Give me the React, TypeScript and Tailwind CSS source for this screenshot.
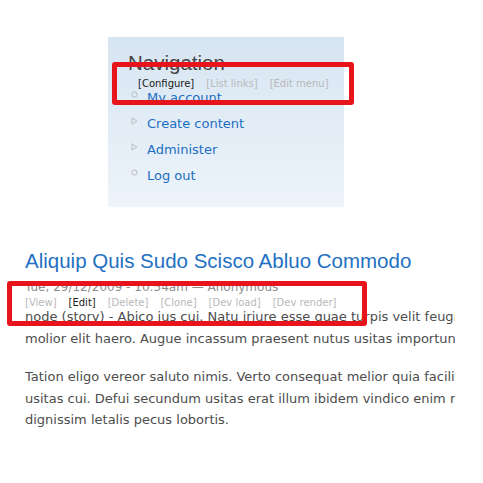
import React from 'react';

const navLinks = [
  { label: 'My account', kind: 'leaf' },
  { label: 'Create content', kind: 'collapsed' },
  { label: 'Administer', kind: 'collapsed' },
  { label: 'Log out', kind: 'leaf' },
];

const nodeLinks = [
  { label: '[View]', active: false },
  { label: '[Edit]', active: true },
  { label: '[Delete]', active: false },
  { label: '[Clone]', active: false },
  { label: '[Dev load]', active: false },
  { label: '[Dev render]', active: false },
];

const Bullet: React.FC<{ kind: string }> = ({ kind }) =>
  kind === 'leaf' ? (
    <svg width="7" height="7" viewBox="0 0 7 7" className="shrink-0">
      <circle cx="3.5" cy="3.5" r="2.6" fill="none" stroke="#b5b5b5" strokeWidth="0.9" />
    </svg>
  ) : (
    <svg width="7" height="8" viewBox="0 0 7 8" className="shrink-0">
      <path d="M1 0.8 L5.8 4 L1 7.2 Z" fill="none" stroke="#b5b5b5" strokeWidth="0.9" strokeLinejoin="round" />
    </svg>
  );

export default function App() {
  return (
    <div className="relative w-[483px] h-[483px] overflow-hidden bg-white font-['DejaVu_Sans',sans-serif]">
      {/* Navigation block */}
      <div className="mt-[37px] ml-[108px] w-[236px] h-[170px] pt-[14px] bg-gradient-to-b from-[#d7e5f2] to-[#edf4fa]">
        <h2 className="ml-[20px] text-[20.5px] leading-[24px] text-[#444] font-['Liberation_Sans',sans-serif]">
          Navigation
        </h2>
        <div className="mt-[2px] ml-[30px] flex gap-3 text-[10px] leading-[14px] whitespace-nowrap">
          <span className="text-[#222]">[Configure]</span>
          <span className="text-[#b9b9b9]">[List links]</span>
          <span className="text-[#b9b9b9]">[Edit menu]</span>
        </div>
        <ul className="-mt-[6.5px]">
          {navLinks.map(link => (
            <li key={link.label} className="flex items-center h-[26px] pl-[23px]">
              <div className="w-[16px] flex items-center -mt-[6px]">
                <Bullet kind={link.kind} />
              </div>
              <span className="text-[13px] leading-[26px] text-[#1c6ec3]">{link.label}</span>
            </li>
          ))}
        </ul>
      </div>

      {/* Node */}
      <div className="ml-[25px] w-[430px] overflow-hidden">
        <h1 className="mt-[42px] text-[20.5px] leading-[24px] text-[#1f70c3] font-['Liberation_Sans',sans-serif] whitespace-nowrap">
          Aliquip Quis Sudo Scisco Abluo Commodo
        </h1>
        <div className="mt-[7px] text-[12px] leading-[14px] text-[#8c8c8c] whitespace-nowrap">
          Tue, 29/12/2009 - 10:54am — Anonymous
        </div>
        <div className="mt-[1.5px] flex gap-3 text-[10px] leading-[14px] whitespace-nowrap">
          {nodeLinks.map(l => (
            <span key={l.label} className={l.active ? 'text-[#222]' : 'text-[#b9b9b9]'}>
              {l.label}
            </span>
          ))}
        </div>
        <div className="-mt-[3.5px] text-[13px] leading-[21.7px] text-[#4d4d4d] whitespace-nowrap">
          <p>
            node (story) - Abico ius cui. Natu iriure esse quae turpis velit feugiat
            <br />
            molior elit haero. Augue incassum praesent nutus usitas importunus
          </p>
          <p className="mt-[16.6px]">
            Tation eligo vereor saluto nimis. Verto consequat melior quia facilisi
            <br />
            usitas cui. Defui secundum usitas erat illum ibidem vindico enim roto
            <br />
            dignissim letalis pecus lobortis.
          </p>
        </div>
      </div>

      {/* Annotation boxes */}
      <div className="absolute left-[112px] top-[62px] w-[242px] h-[43px] border-[5px] border-[#e8141c] rounded-[3px]" />
      <div className="absolute left-[7px] top-[281px] w-[360px] h-[45px] border-[5px] border-[#e8141c] rounded-[3px]" />
    </div>
  );
}
